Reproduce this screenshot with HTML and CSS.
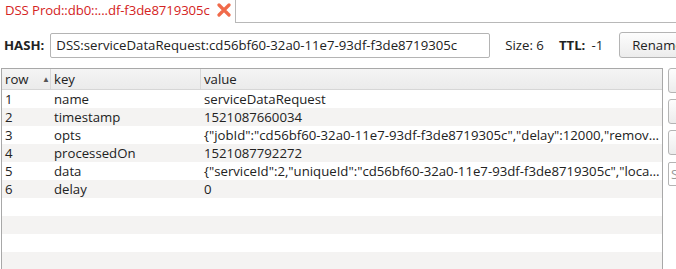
FILE: index.html
```html
<!DOCTYPE html>
<html lang="en">

<head>
  <meta charset="UTF-8" />
  <title>DSS Prod::db0</title>
  <link rel="stylesheet" href="styles.css">
</head>

<body>
  <!-- Tab bar -->
  <div class="tabbar">
    <div class="tab">
      <span class="tab-title">DSS Prod::db0::...df-f3de8719305c</span>
      <svg class="tab-close" width="14" height="14" viewBox="0 0 14 14">
        <path d="M2 2 L12 12 M12 2 L2 12" stroke="#f06a4a" stroke-width="3.2" stroke-linecap="round" />
      </svg>
    </div>
    <div class="tab-rest"></div>
  </div>

  <!-- Key info -->
  <div class="keybar">
    <span class="label">HASH:</span>
    <input class="key-input" type="text" value="DSS:serviceDataRequest:cd56bf60-32a0-11e7-93df-f3de8719305c" />
    <span class="size">Size: 6</span>
    <span class="label">TTL:</span>
    <span class="ttl">-1</span>
    <button class="btn">Rename</button>
  </div>

  <!-- Values -->
  <div class="content">
    <div class="table">
      <div class="row head">
        <div class="c-row">row <span class="sort">&#9650;</span></div>
        <div class="c-key">key</div>
        <div class="c-val">value</div>
      </div>
      <div class="row">
        <div class="c-row">1</div>
        <div class="c-key">name</div>
        <div class="c-val">serviceDataRequest</div>
      </div>
      <div class="row alt">
        <div class="c-row">2</div>
        <div class="c-key">timestamp</div>
        <div class="c-val">1521087660034</div>
      </div>
      <div class="row">
        <div class="c-row">3</div>
        <div class="c-key">opts</div>
        <div class="c-val">{"jobId":"cd56bf60-32a0-11e7-93df-f3de8719305c","delay":12000,"removeOnComplete":true}</div>
      </div>
      <div class="row alt">
        <div class="c-row">4</div>
        <div class="c-key">processedOn</div>
        <div class="c-val">1521087792272</div>
      </div>
      <div class="row">
        <div class="c-row">5</div>
        <div class="c-key">data</div>
        <div class="c-val">{"serviceId":2,"uniqueId":"cd56bf60-32a0-11e7-93df-f3de8719305c","location":"prod"}</div>
      </div>
      <div class="row alt">
        <div class="c-row">6</div>
        <div class="c-key">delay</div>
        <div class="c-val">0</div>
      </div>
      <div class="row"></div>
      <div class="row alt"></div>
      <div class="row"></div>
      <div class="row alt"></div>
    </div>

    <div class="side">
      <button class="btn side-btn">Add row</button>
      <button class="btn side-btn">Delete row</button>
      <button class="btn side-btn">Reload</button>
      <input class="search" type="text" placeholder="Search" />
    </div>
  </div>
</body>

</html>
```

FILE: styles.css
```css
* {
  margin: 0;
  padding: 0;
  box-sizing: border-box;
}

body {
  font-family: "Open Sans", "Noto Sans", sans-serif;
  font-size: 13.2px;
  color: #222;
  background-color: #fff;
  width: 676px;
  height: 269px;
  overflow: hidden;
}

/* Tab bar */
.tabbar {
  display: flex;
  height: 26px;
}

.tab {
  display: flex;
  align-items: center;
  gap: 7px;
  padding: 0 0 3px 5px;
  width: 236px;
  flex: none;
  border-right: 1px solid #b8b8b8;
  height: 23px;
  white-space: nowrap;
}

.tab-title {
  color: #d42323;
  letter-spacing: -0.1px;
}

.tab-close {
  flex: none;
}

.tab-rest {
  flex: 1;
  height: 23px;
  border-bottom: 1px solid #b8b8b8;
}

/* Key info */
.keybar {
  display: flex;
  align-items: center;
  height: 32px;
  margin-top: 3px;
  padding: 0 0 0 4px;
  white-space: nowrap;
}

.label {
  font-weight: bold;
  margin-right: 6px;
}

.key-input {
  font-family: inherit;
  font-size: 13.2px;
  width: 440px;
  height: 25px;
  border: 1px solid #b4b4b4;
  border-radius: 2px;
  padding: 0 5px;
  color: #222;
  margin-right: 15px;
  flex: none;
}

.size {
  margin-right: 15px;
}

.ttl {
  margin-right: 16px;
}

.btn {
  font-family: inherit;
  font-size: 13.2px;
  color: #222;
  height: 26px;
  padding: 0 12px;
  border: 1px solid #b4b4b4;
  border-radius: 3px;
  background: linear-gradient(#fdfdfd, #ececec);
  flex: none;
  text-align: left;
}

/* Values */
.content {
  display: flex;
  gap: 5px;
  padding: 7px 0 0 1px;
}

.table {
  width: 662px;
  height: 201px;
  border-left: 1px solid #a8a8a8;
  border-right: 1px solid #a8a8a8;
  border-top: 1px solid #a8a8a8;
  flex: none;
  overflow: hidden;
}

.row {
  display: flex;
  height: 18px;
  line-height: 18px;
  white-space: nowrap;
}

.row.alt {
  background-color: #f4f3f2;
}

.row.head {
  height: 21px;
  line-height: 20px;
  background: linear-gradient(#f4f4f4, #ebebeb);
  border-bottom: 1px solid #d6d6d6;
}

.row > div {
  padding-left: 3px;
  overflow: hidden;
  text-overflow: ellipsis;
}

.c-row {
  width: 49px;
  flex: none;
}

.c-key {
  width: 150px;
  flex: none;
}

.c-val {
  flex: 1;
  padding-right: 0;
}

.head > div {
  border-right: 1px solid #d8d8d8;
}

.head .c-val {
  border-right: none;
}

.sort {
  font-size: 8px;
  color: #555;
  margin-left: 10px;
  vertical-align: 2px;
}

.side {
  display: flex;
  flex-direction: column;
  gap: 6px;
  width: 90px;
  flex: none;
}

.side-btn {
  height: 25px;
  width: 90px;
  text-align: center;
}

.search {
  font-family: inherit;
  font-size: 13.2px;
  height: 24px;
  width: 90px;
  border: 1px solid #b4b4b4;
  border-radius: 2px;
  padding: 0 2px;
  margin-top: 1px;
}

.search::placeholder {
  color: #999;
}
```
